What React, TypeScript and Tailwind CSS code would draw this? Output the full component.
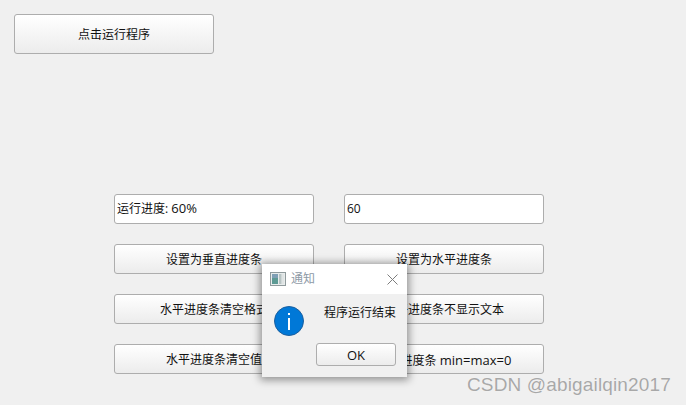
import React from "react";

const font = "[font-family:'Open_Sans','Noto_Sans_CJK_SC',sans-serif]";

function PushButton({ label, className = "" }: { label: React.ReactNode; className?: string }) {
  return (
    <button
      className={`flex items-center justify-center rounded-[3px] border border-[#adadad] bg-gradient-to-b from-[#ffffff] to-[#ececec] pt-[2px] text-[12px] leading-none text-[#111] ${className}`}
    >
      <span>{label}</span>
    </button>
  );
}

function TextField({ value }: { value: React.ReactNode }) {
  return (
    <div className="flex h-[30px] w-[200px] items-center rounded-[3px] border border-[#adadad] bg-white pl-[2px] text-[12px] text-[#111]">
      <span>{value}</span>
    </div>
  );
}

function InfoDialog() {
  return (
    <div className="absolute left-[262px] top-[264px] flex h-[113px] w-[145px] flex-col bg-[#f0f0f0] shadow-[0_1px_8px_2px_rgba(0,0,0,0.4)]">
      <div className="flex h-[30px] items-center bg-white pl-[8px] pr-[9px]">
        <svg width="16" height="14" viewBox="0 0 16 14">
          <rect x="0.5" y="0.5" width="15" height="13" fill="#e8ecec" stroke="#8f9a9c" />
          <rect x="2" y="2" width="6" height="10" fill="#5d9a94" />
          <rect x="2" y="2" width="6" height="4" fill="#7f9fb5" />
          <rect x="9" y="2" width="2.5" height="10" fill="#b8c4c4" />
          <rect x="12" y="2" width="2" height="10" fill="#dfe4e4" />
        </svg>
        <span className="ml-[5px] text-[12px] text-[#8e9aa6]">通知</span>
        <svg className="ml-auto" width="11" height="11" viewBox="0 0 11 11">
          <path d="M0.5 0.5L10.5 10.5M10.5 0.5L0.5 10.5" stroke="#7d7d7d" strokeWidth="1" fill="none" />
        </svg>
      </div>
      <div className="flex flex-1 flex-col pl-[12px] pr-[11px]">
        <div className="flex items-start">
          <svg className="mt-[12px]" width="30" height="30" viewBox="0 0 30 30">
            <circle cx="15" cy="15" r="14.5" fill="#0078d7" stroke="#1c5f9e" strokeWidth="1" />
            <rect x="14" y="12" width="2" height="12" fill="#fff" />
            <rect x="14" y="7" width="2" height="2" fill="#fff" />
          </svg>
          <span className="ml-auto mt-[10px] text-[12px] leading-[17px] text-[#111]">程序运行结束</span>
        </div>
        <PushButton label="OK" className="ml-auto mt-[7px] h-[23px] w-[80px] !text-[13px]" />
      </div>
    </div>
  );
}

export default function App() {
  return (
    <div className={`relative h-[405px] w-[686px] overflow-hidden bg-[#f0f0f0] ${font}`}>
      <div className="pl-[14px] pt-[14px]">
        <PushButton label="点击运行程序" className="h-[40px] w-[200px]" />
      </div>

      <div className="ml-[114px] mt-[140px] grid w-[430px] grid-cols-[200px_200px] gap-x-[30px] gap-y-[20px]">
        <TextField value={<>运行进度: <span className="text-[13px]">60%</span></>} />
        <TextField value="60" />
        <PushButton label="设置为垂直进度条" className="h-[30px]" />
        <PushButton label="设置为水平进度条" className="h-[30px]" />
        <PushButton label="水平进度条清空格式" className="h-[30px]" />
        <PushButton label="水平进度条不显示文本" className="h-[30px]" />
        <PushButton label="水平进度条清空值" className="h-[30px]" />
        <PushButton label={<>水平进度条 <span className="text-[13px]">min=max=0</span></>} className="h-[30px]" />
      </div>

      <InfoDialog />

      <div className="absolute left-[467px] top-[371px] [font-family:'Liberation_Sans',sans-serif] text-[19px] leading-[27px] tracking-[0.15px] text-[#a8a8a8] [text-shadow:0_0_1px_rgba(255,255,255,0.9)]">
        CSDN @abigailqin2017
      </div>
    </div>
  );
}
